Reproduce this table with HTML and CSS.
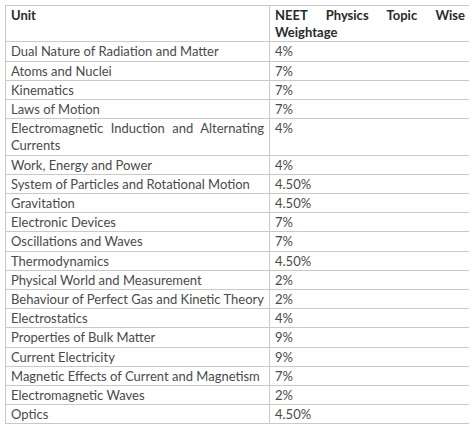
FILE: index.html
```html
<!DOCTYPE html>
<html>
<head>
<meta charset="utf-8">
<link rel="stylesheet" href="styles.css">
</head>
<body>
<table class="weight-table">
  <colgroup><col class="c1"><col class="c2"></colgroup>
  <thead>
    <tr><th>Unit</th><th>NEET Physics Topic Wise Weightage</th></tr>
  </thead>
  <tbody>
    <tr><td>Dual Nature of Radiation and Matter</td><td>4%</td></tr>
    <tr><td>Atoms and Nuclei</td><td>7%</td></tr>
    <tr><td>Kinematics</td><td>7%</td></tr>
    <tr><td>Laws of Motion</td><td>7%</td></tr>
    <tr><td>Electromagnetic Induction and Alternating Currents</td><td>4%</td></tr>
    <tr><td>Work, Energy and Power</td><td>4%</td></tr>
    <tr><td>System of Particles and Rotational Motion</td><td>4.50%</td></tr>
    <tr><td>Gravitation</td><td>4.50%</td></tr>
    <tr><td>Electronic Devices</td><td>7%</td></tr>
    <tr><td>Oscillations and Waves</td><td>7%</td></tr>
    <tr><td>Thermodynamics</td><td>4.50%</td></tr>
    <tr><td>Physical World and Measurement</td><td>2%</td></tr>
    <tr><td>Behaviour of Perfect Gas and Kinetic Theory</td><td>2%</td></tr>
    <tr><td>Electrostatics</td><td>4%</td></tr>
    <tr><td>Properties of Bulk Matter</td><td>9%</td></tr>
    <tr><td>Current Electricity</td><td>9%</td></tr>
    <tr><td>Magnetic Effects of Current and Magnetism</td><td>7%</td></tr>
    <tr><td>Electromagnetic Waves</td><td>2%</td></tr>
    <tr><td>Optics</td><td>4.50%</td></tr>
  </tbody>
</table>
</body>
</html>
```
FILE: styles.css
```css
html, body {
  background: #ffffff;
}
body {
  margin: 5px;
  font-family: Lato, "Open Sans", sans-serif;
  font-size: 13px;
  color: #4a4a4a;
}
.weight-table {
  border-collapse: collapse;
  table-layout: fixed;
  width: 465px;
}
.c1 { width: 264px; }
.c2 { width: 201px; }
.weight-table th,
.weight-table td {
  border: 1px solid #c9c9c9;
  padding: 1px 5px 0 5px;
  line-height: 17.2px;
  text-align: justify;
  vertical-align: top;
}
.weight-table th {
  font-weight: 700;
  color: #2a2a2a;
}
```
